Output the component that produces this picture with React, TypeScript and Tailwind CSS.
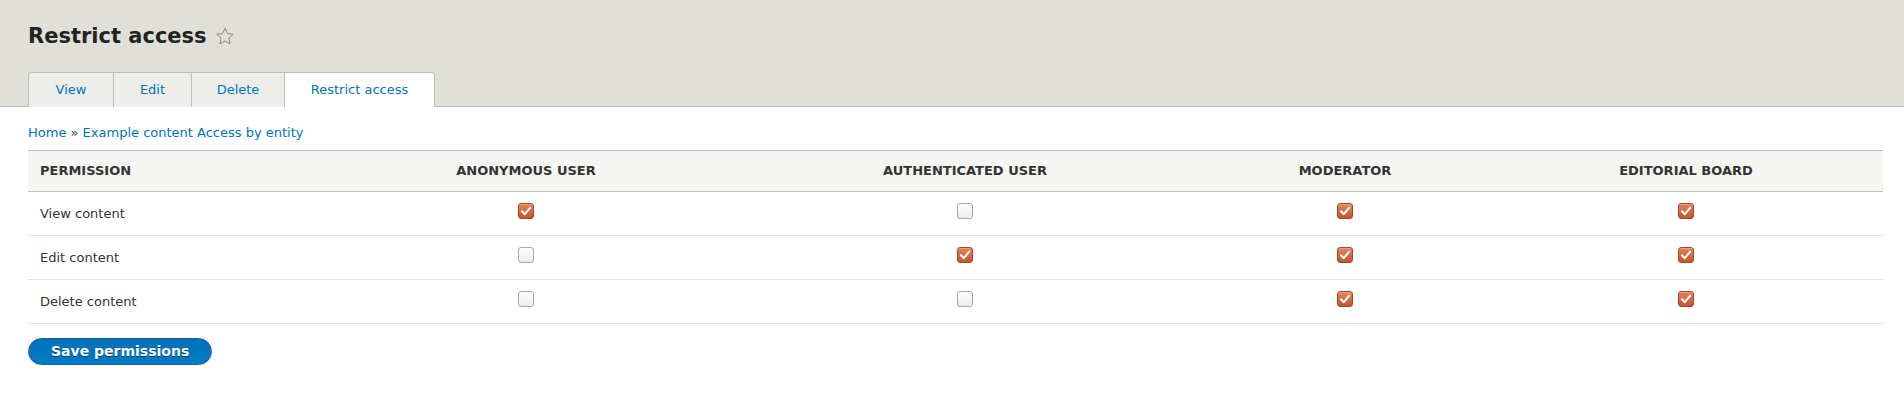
import React from "react";

const font = { fontFamily: '"DejaVu Sans", Verdana, sans-serif' };

function Check({ on }: { on: boolean }) {
  if (on) {
    return (
      <span className="relative inline-flex h-[16px] w-[16px] items-center justify-center rounded-[3px] border border-[#a6452a] bg-gradient-to-b from-[#e4835a] to-[#c4552f] shadow-[inset_0_1px_0_rgba(255,255,255,0.25)]">
        <svg width="12" height="12" viewBox="0 0 12 12" fill="none">
          <path d="M2 6.3 L4.8 9.2 L10.2 2.6" stroke="#ffffff" strokeWidth="2" strokeLinecap="round" strokeLinejoin="round" />
        </svg>
      </span>
    );
  }
  return (
    <span className="inline-block h-[16px] w-[16px] rounded-[3px] border border-[#a8a8a8] bg-gradient-to-b from-[#ffffff] to-[#ebebeb]" />
  );
}

const rows: { label: string; vals: boolean[] }[] = [
  { label: "View content", vals: [true, false, true, true] },
  { label: "Edit content", vals: [false, true, true, true] },
  { label: "Delete content", vals: [false, false, true, true] },
];

const heads = ["ANONYMOUS USER", "AUTHENTICATED USER", "MODERATOR", "EDITORIAL BOARD"];

export default function App() {
  return (
    <div className="min-h-[402px] bg-white text-[13px] text-[#333333]" style={font}>
      <div className="border-b border-[#bfbfba] bg-[#e0e0d8] px-[28px] pt-[23px]">
        <div className="flex items-center">
          <h1 className="text-[21px] font-bold leading-[26px] text-[#232323]">Restrict access</h1>
          <svg className="ml-[8px] mt-[1px]" width="20" height="19" viewBox="0 0 20 19" fill="none">
            <path
              d="M10 1.2 L12.45 6.6 L18.3 7.2 L13.9 11.1 L15.15 16.9 L10 13.95 L4.85 16.9 L6.1 11.1 L1.7 7.2 L7.55 6.6 Z"
              stroke="#8a8a84"
              strokeWidth="1"
              strokeLinejoin="round"
            />
          </svg>
        </div>
        <div className="mt-[23px] -mb-px flex">
          <div className="flex h-[35px] w-[86px] items-center justify-center rounded-tl-[4px] border border-b-0 border-[#bfbfba] bg-[#edede9] text-[13px] text-[#0074bd]">
            View
          </div>
          <div className="-ml-px flex h-[35px] w-[79px] items-center justify-center border border-b-0 border-[#bfbfba] bg-[#edede9] text-[13px] text-[#0074bd]">
            Edit
          </div>
          <div className="-ml-px flex h-[35px] w-[94px] items-center justify-center border border-b-0 border-[#bfbfba] bg-[#edede9] text-[13px] text-[#0074bd]">
            Delete
          </div>
          <div className="-ml-px flex h-[35px] w-[151px] items-center justify-center rounded-tr-[4px] border border-b-0 border-[#bfbfba] bg-white text-[13px] text-[#0074bd]">
            Restrict access
          </div>
        </div>
      </div>

      <div className="pl-[28px] pr-[21px] pt-[16px]">
        <div className="leading-[20px]">
          <span className="text-[#0074bd]">Home</span>
          <span className="text-[#3d4a5a]"> » </span>
          <span className="text-[#0074bd]">Example content Access by entity</span>
        </div>

        <div className="mt-[7px]">
          <div className="grid h-[42px] grid-cols-[295px_406px_472px_288px_1fr] items-center border-y border-[#bfbfba] bg-[#f5f5f2] text-[13px] font-bold text-[#333333]">
            <div className="pl-[12px]">PERMISSION</div>
            {heads.map((h) => (
              <div key={h} className="text-center">
                {h}
              </div>
            ))}
          </div>
          {rows.map((r) => (
            <div
              key={r.label}
              className="grid h-[44px] grid-cols-[295px_406px_472px_288px_1fr] items-center border-b border-[#e6e4df]"
            >
              <div className="pl-[12px] pt-[1px]">{r.label}</div>
              {r.vals.map((v, i) => (
                <div key={i} className="flex justify-center pb-[5px]">
                  <Check on={v} />
                </div>
              ))}
            </div>
          ))}
        </div>

        <button className="mt-[14px] rounded-full border border-[#1e5c90] bg-gradient-to-t from-[#007bc6] to-[#0071b8] px-[22px] py-[4px] text-[14px] font-bold leading-[17px] text-white [text-shadow:0_1px_0_rgba(0,0,0,0.5)]">
          Save permissions
        </button>
      </div>
    </div>
  );
}
